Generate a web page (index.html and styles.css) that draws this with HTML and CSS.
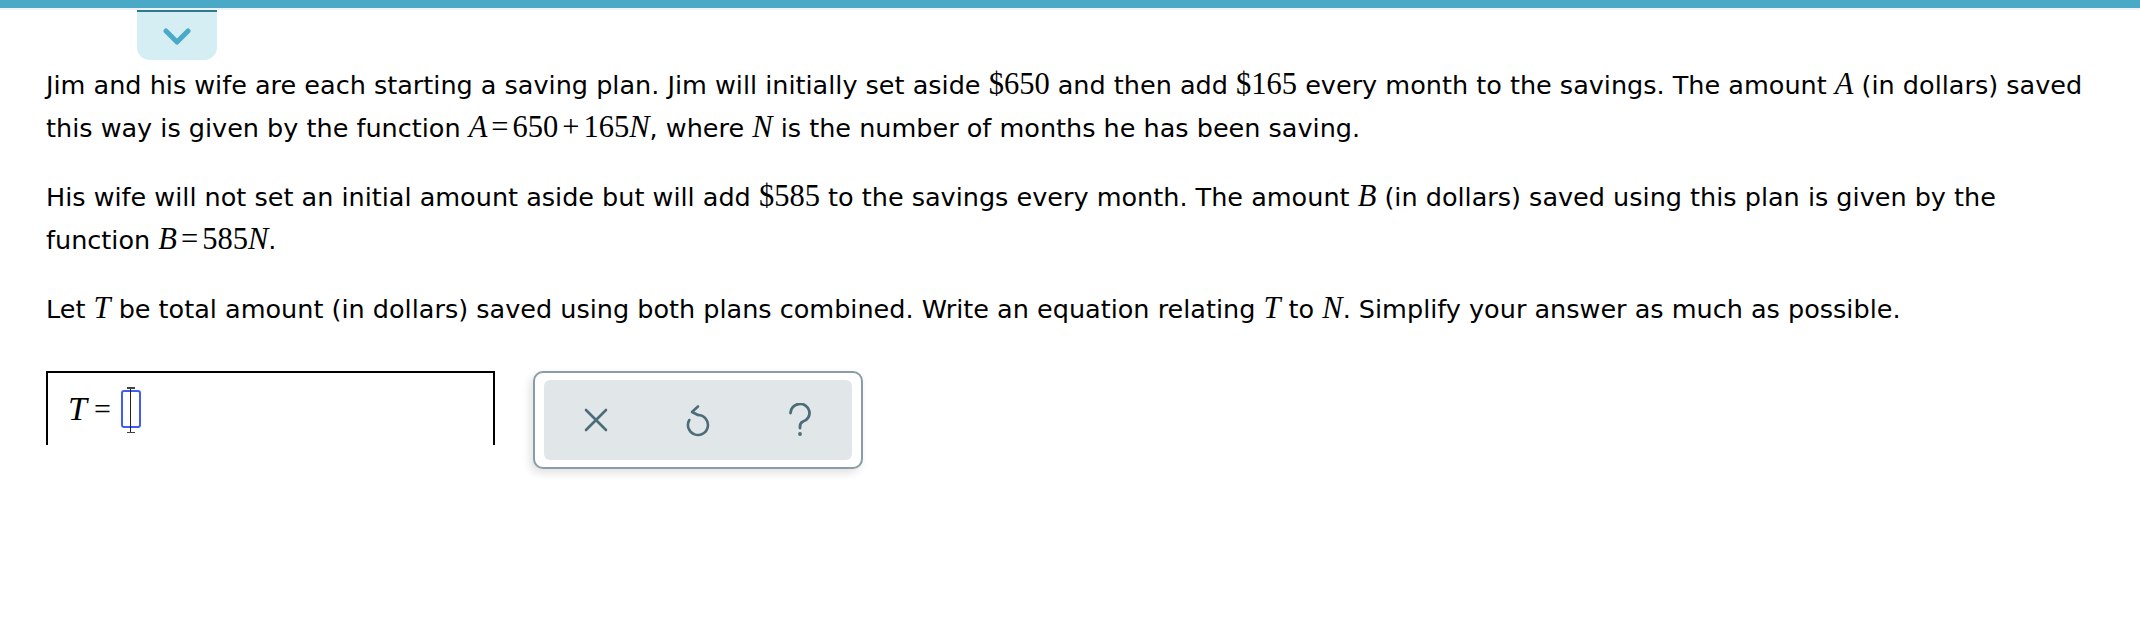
FILE: index.html
```html
<!DOCTYPE html>
<html>
<head>
<meta charset="utf-8">
<link rel="stylesheet" href="styles.css">
</head>
<body>
<div class="topbar"></div>
<div class="topline"></div>
<div class="tab">
  <svg width="28" height="18" viewBox="0 0 28 18"><path d="M3 3 L14 14 L25 3" fill="none" stroke="#4aa9c7" stroke-width="5" stroke-linecap="round" stroke-linejoin="round"/></svg>
</div>
<main class="content">
  <p class="para"><span class="line">Jim and his wife are each starting a saving plan. Jim will initially set aside <span class="m">$650</span> and then add <span class="m">$165</span> every month to the savings. The amount <span class="m"><i>A</i></span> (in dollars) saved</span><span class="line">this way is given by the function <span class="m"><i>A</i><span class="op">=</span>650<span class="op">+</span>165<i>N</i></span>, where <span class="m"><i>N</i></span> is the number of months he has been saving.</span></p>
  <p class="para"><span class="line">His wife will not set an initial amount aside but will add <span class="m">$585</span> to the savings every month. The amount <span class="m"><i>B</i></span> (in dollars) saved using this plan is given by the</span><span class="line">function <span class="m"><i>B</i><span class="op">=</span>585<i>N</i></span>.</span></p>
  <p class="para"><span class="line">Let <span class="m"><i>T</i></span> be total amount (in dollars) saved using both plans combined. Write an equation relating <span class="m"><i>T</i></span> to <span class="m"><i>N</i></span>. Simplify your answer as much as possible.</span></p>
  <div class="answer-row">
    <div class="answer-box">
      <span class="ans-var">T</span><span class="ans-eq">=</span>
      <span class="slot"><span class="caret"></span></span>
    </div>
    <div class="tools">
      <div class="tools-inner">
        <button class="tool" aria-label="clear">
          <svg width="24" height="24" viewBox="0 0 24 24"><path d="M2 2 L22 22 M22 2 L2 22" stroke="#4d6c79" stroke-width="2.6" fill="none" stroke-linecap="round"/></svg>
        </button>
        <button class="tool" aria-label="undo">
          <svg width="28" height="34" viewBox="0 0 28 34"><path d="M14 12 A10 10 0 1 1 5.3 17" stroke="#4d6c79" stroke-width="2.6" fill="none" stroke-linecap="round"/><path d="M14 3.5 L8 9 L14 12" stroke="#4d6c79" stroke-width="2.6" fill="none" stroke-linecap="round" stroke-linejoin="round"/></svg>
        </button>
        <button class="tool" aria-label="help">
          <svg width="24" height="34" viewBox="0 0 24 34"><path d="M2.5 10 A9.5 9 0 1 1 15 18.5 Q12 20 12 23.5 L12 25" stroke="#4d6c79" stroke-width="2.8" fill="none" stroke-linecap="round"/><circle cx="12" cy="31" r="1.9" fill="#4d6c79"/></svg>
        </button>
      </div>
    </div>
  </div>
</main>
</body>
</html>
```
FILE: styles.css
```css
html, body {
  margin: 0;
  padding: 0;
  background: #fff;
}
body {
  font-family: "DejaVu Sans", Verdana, sans-serif;
  color: #000;
  position: relative;
  height: 632px;
  overflow: hidden;
}
.topbar {
  height: 8px;
  background: #4aa9c7;
}
.topline {
  height: 2px;
  background: #eef2f4;
}
.tab {
  position: absolute;
  left: 137px;
  top: 10px;
  width: 80px;
  height: 50px;
  background: #d5eef4;
  border-top: 2px solid #2e7a8c;
  border-radius: 0 0 13px 13px;
  display: flex;
  justify-content: center;
  align-items: flex-start;
  padding-top: 16px;
  box-sizing: border-box;
}
.content {
  padding: 54px 0 0 46px;
}
.para {
  margin: 0 0 26px 0;
  font-size: 25.5px;
  line-height: 43px;
}
.line {
  display: block;
  white-space: nowrap;
  height: 43px;
}
.m {
  font-family: "Liberation Serif", "Times New Roman", serif;
  font-size: 30.5px;
  line-height: 1;
}
.m i {
  font-style: italic;
}
.op {
  margin: 0 4px;
}
.answer-row {
  display: flex;
  align-items: flex-start;
  gap: 38px;
  margin-top: 40px;
}
.answer-box {
  width: 449px;
  height: 74px;
  box-sizing: border-box;
  border: 2px solid #000;
  border-bottom: none;
  display: flex;
  align-items: center;
  padding: 0 0 0 20px;
  font-family: "Liberation Serif", "Times New Roman", serif;
}
.ans-var {
  font-style: italic;
  font-size: 34px;
}
.ans-eq {
  font-size: 30px;
  margin-left: 7px;
}
.slot {
  margin-left: 10px;
  width: 16px;
  height: 34px;
  border: 2px solid #3f5cf4;
  border-radius: 3px;
  position: relative;
}
.caret {
  position: absolute;
  left: 7px;
  top: -5px;
  width: 1.5px;
  height: 46px;
  background: #222;
}
.caret::before, .caret::after {
  content: "";
  position: absolute;
  left: -3px;
  width: 8px;
  height: 1.5px;
  background: #444;
}
.caret::before { top: 0; }
.caret::after { bottom: 0; }
.tools {
  width: 330px;
  height: 98px;
  box-sizing: border-box;
  border: 2px solid #8a9da7;
  border-radius: 10px;
  background: #fff;
  padding: 7px 9px;
  box-shadow: -3px 4px 8px rgba(0,0,0,0.12);
}
.tools-inner {
  height: 100%;
  background: #e1e6e9;
  border-radius: 6px;
  display: flex;
  justify-content: space-between;
  align-items: center;
  padding: 0 32px;
}
.tool {
  border: none;
  background: transparent;
  padding: 0;
  width: 40px;
  height: 40px;
  display: flex;
  align-items: center;
  justify-content: center;
}
```
